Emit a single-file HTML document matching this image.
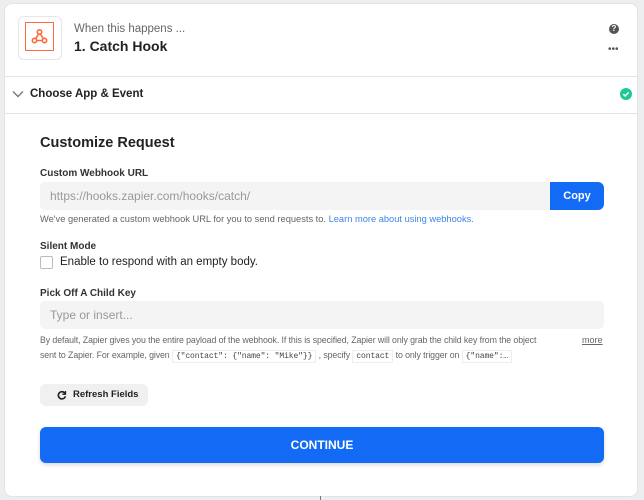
<!DOCTYPE html>
<html><head><style>
*{box-sizing:border-box;margin:0;padding:0}
body{width:644px;height:500px;background:#eceef0;font-family:"Liberation Sans",sans-serif;position:relative;overflow:hidden;color:#222}
.card{position:absolute;left:4px;top:3px;width:634px;height:494px;background:#fff;border-radius:8px;border:1px solid #e2e4e6}
.a{position:absolute}
.line{position:absolute;left:0;right:0;height:1px;background:#e3e5e7}
.lbl{position:absolute;left:35px;font-size:10px;font-weight:bold;color:#333}
.inp{position:absolute;left:35px;background:#f4f4f4;border-radius:5px;font-size:12px;color:#999;padding-left:10px;line-height:28px;height:28px}
.code{font-family:"Liberation Mono",monospace;font-size:8px;border:1px solid #eee;padding:1px 3px;color:#444}
.d{position:absolute;left:35px;font-size:8.8px;color:#666;white-space:nowrap;letter-spacing:-0.1px}
</style></head><body>
<div class="card">
 <div class="a" style="left:13px;top:12px;width:44px;height:44px;border:1px solid #e6e6e6;border-radius:6px"></div>
 <div class="a" style="left:20px;top:18px;width:29px;height:29px;border:1.5px solid #ff6a3d;"></div>
 <svg class="a" style="left:26px;top:24px" width="17" height="17" viewBox="0 0 17 17" fill="none" stroke="#ff6a3d" stroke-width="1.6"><circle cx="8.5" cy="4" r="2.2"/><circle cx="3.5" cy="12.5" r="2.2"/><circle cx="13.5" cy="12.5" r="2.2"/><path d="M7.5 6l-3 5M5.7 12.5h5.6M9.5 6l3 5"/></svg>
 <div class="a" style="left:69px;top:19px;font-size:11.5px;color:#666">When this happens ...</div>
 <div class="a" style="left:69px;top:34px;font-size:14px;font-weight:bold;color:#222">1. Catch Hook</div>
 <div class="a" style="left:604px;top:20px;width:10px;height:10px;border-radius:50%;background:#555;color:#fff;font-size:8px;font-weight:bold;text-align:center;line-height:10px">?</div>
 <div class="a" style="left:603px;top:40px;font-size:10px;color:#555">•••</div>
 <div class="line" style="top:72px"></div>
 <svg class="a" style="left:7px;top:86px" width="12" height="8" viewBox="0 0 12 8" fill="none" stroke="#777" stroke-width="1.4"><path d="M1 1.5l5 5 5-5"/></svg>
 <div class="a" style="left:25px;top:84px;font-size:11.5px;font-weight:bold;color:#222">Choose App &amp; Event</div>
 <svg class="a" style="left:615px;top:84px" width="12" height="12" viewBox="0 0 12 12"><circle cx="6" cy="6" r="6" fill="#1ec997"/><path d="M3.3 6.2l1.8 1.8 3.6-3.6" stroke="#fff" stroke-width="1.5" fill="none"/></svg>
 <div class="line" style="top:109px"></div>
 <div class="a" style="left:35px;top:131px;font-size:14.5px;font-weight:bold;color:#222">Customize Request</div>
 <div class="lbl" style="top:164px">Custom Webhook URL</div>
 <div class="inp" style="top:178px;width:520px;border-radius:5px 0 0 5px">https://hooks.zapier.com/hooks/catch/</div>
 <div class="a" style="left:545px;top:178px;width:54px;height:28px;background:#136bf5;border-radius:0 6px 6px 0;color:#fff;font-weight:bold;font-size:11px;text-align:center;line-height:28px">Copy</div>
 <div class="a" style="left:35px;top:210px;font-size:9.3px;color:#666">We've generated a custom webhook URL for you to send requests to. <span style="color:#3d87e6">Learn more about using webhooks.</span></div>
 <div class="lbl" style="top:237px">Silent Mode</div>
 <div class="a" style="left:35px;top:252px;width:13px;height:13px;border:1px solid #bbb;border-radius:2px"></div>
 <div class="a" style="left:55px;top:252px;font-size:11.5px;color:#222">Enable to respond with an empty body.</div>
 <div class="lbl" style="top:284px">Pick Off A Child Key</div>
 <div class="inp" style="top:297px;width:564px">Type or insert...</div>
 <div class="d" style="top:331px">By default, Zapier gives you the entire payload of the webhook. If this is specified, Zapier will only grab the child key from the object</div>
 <div class="d" style="top:346px">sent to Zapier. For example, given <span class="code">{"contact": {"name": "Mike"}}</span> , specify <span class="code">contact</span> to only trigger on <span class="code">{"name":…</span></div>
 <div class="a" style="left:577px;top:331px;font-size:9px;color:#666;text-decoration:underline">more</div>
 <div class="a" style="left:35px;top:380px;width:108px;height:22px;background:#f0f0f0;border-radius:6px;font-size:9.5px;font-weight:bold;color:#222;line-height:22px;padding-left:33px;white-space:nowrap">Refresh Fields</div>
 <svg class="a" style="left:52px;top:386px" width="10" height="10" viewBox="0 0 10 10" fill="none" stroke="#222" stroke-width="1.6"><path d="M8.3 4A3.6 3.6 0 1 0 8.4 6.3"/><path d="M8.5 1v3.2H5.3" stroke-width="1.3"/></svg>
 <div class="a" style="left:35px;top:423px;width:564px;height:36px;background:#136bf5;border-radius:6px;color:#fff;font-weight:bold;font-size:12px;text-align:center;line-height:36px;box-shadow:0 2px 4px rgba(0,0,0,.15)">CONTINUE</div>
</div>
<div class="a" style="left:320px;top:496px;width:1px;height:4px;background:#777"></div>
</body></html>
